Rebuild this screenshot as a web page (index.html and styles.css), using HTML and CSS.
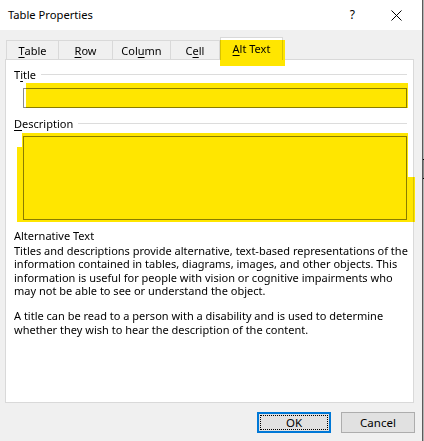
FILE: index.html
```html
<!DOCTYPE html>
<html>
<head>
<meta charset="utf-8">
<link rel="stylesheet" href="styles.css">
</head>
<body>
<div class="screen">
  <div class="dialog">
    <div class="titlebar">
      <span class="wtitle">Table Properties</span>
      <span class="help">?</span>
      <span class="close">
        <svg width="11" height="11" viewBox="0 0 11 11"><path d="M0.5 0.5 L10.5 10.5 M10.5 0.5 L0.5 10.5" stroke="#000" stroke-width="1" fill="none"/></svg>
      </span>
    </div>
    <div class="body">
      <div class="tabs">
        <div class="tab t1"><u>T</u>able</div>
        <div class="tab t2"><u>R</u>ow</div>
        <div class="tab t3">Col<u>u</u>mn</div>
        <div class="tab t4">C<u>e</u>ll</div>
        <div class="tab sel"><u>A</u>lt Text<span class="hl hl-tab"></span></div>
      </div>
      <div class="panel">
        <div class="group"><span>T<u>i</u>tle</span><span class="rule"></span></div>
        <div class="field-wrap">
          <div class="field"></div>
          <span class="hl hl-title"></span>
        </div>
        <div class="group g2"><span><u>D</u>escription</span><span class="rule"></span></div>
        <div class="area-wrap">
          <div class="area"></div>
          <span class="hl hl-desc"></span>
        </div>
        <div class="alt-head">Alternative Text</div>
        <p class="para">Titles and descriptions provide alternative, text-based representations of the<br>information contained in tables, diagrams, images, and other objects. This<br>information is useful for people with vision or cognitive impairments who<br>may not be able to see or understand the object.</p>
        <p class="para p2">A title can be read to a person with a disability and is used to determine<br>whether they wish to hear the description of the content.</p>
      </div>
      <div class="footer">
        <button class="btn ok"><span class="focus">OK</span></button>
        <button class="btn cancel">Cancel</button>
      </div>
    </div>
  </div>
  <div class="edge"><span class="edge-mark"></span></div>
</div>
</body>
</html>
```
FILE: styles.css
```css
html, body {
  margin: 0;
  padding: 0;
}
body {
  width: 424px;
  height: 441px;
  overflow: hidden;
  font-family: "Noto Sans", "Segoe UI", sans-serif;
  font-size: 11px;
  color: #000;
  background: #f0f0f0;
}
.screen {
  display: flex;
  height: 441px;
}
.dialog {
  width: 422px;
  height: 441px;
  background: #f0f0f0;
  display: flex;
  flex-direction: column;
}
.edge {
  width: 1px;
  flex: none;
  border-left: 1px solid #5a5a5a;
  background: #b4b4b4;
  position: relative;
}
.edge-mark {
  position: absolute;
  left: 0;
  top: 159px;
  width: 1px;
  height: 18px;
  border-top: 1px solid #000;
  border-bottom: 1px solid #000;
  background: #8c8c8c;
}
.titlebar {
  height: 30px;
  background: #fff;
  display: flex;
  align-items: center;
  flex: none;
}
.wtitle {
  margin-left: 8px;
  font-size: 11.2px;
  flex: 1;
  padding-bottom: 1px;
}
.help {
  font-size: 12px;
  margin-right: 36px;
  padding-bottom: 1px;
}
.close {
  display: flex;
  margin-right: 20px;
}
.body {
  flex: 1;
  display: flex;
  flex-direction: column;
  padding: 7px 0 0 0;
}
.tabs {
  display: flex;
  align-items: flex-end;
  height: 22px;
  margin-left: 6px;
  position: relative;
  z-index: 2;
}
.tab {
  height: 19px;
  box-sizing: border-box;
  border: 1px solid #d9d9d9;
  border-bottom: none;
  border-right: none;
  background: #f0f0f0;
  display: flex;
  justify-content: center;
  align-items: center;
  padding-top: 1px;
}
.t1 { width: 52px; }
.t2 { width: 54px; }
.t3 { width: 58px; }
.t4 { width: 50px; border-right: 1px solid #d9d9d9; }
.tab.sel {
  width: 63px;
  height: 23px;
  background: #fff;
  border: 1px solid #d9d9d9;
  border-bottom: none;
  margin-bottom: -1px;
  position: relative;
  padding-top: 0;
  padding-bottom: 2px;
}
.hl {
  position: absolute;
  background: #ffe600;
  mix-blend-mode: multiply;
}
.hl-tab {
  left: -1px;
  top: 2px;
  width: 65px;
  height: 26px;
}
.panel {
  margin-left: 5px;
  width: 409px;
  height: 344px;
  box-sizing: border-box;
  border: 1px solid #d9d9d9;
  background: #fff;
  padding: 6px 6px 0 8px;
  position: relative;
  z-index: 1;
}
.group {
  display: flex;
  align-items: center;
  height: 16px;
}
u { text-decoration-thickness: 1px; text-underline-offset: 2px; }
.rule {
  flex: 1;
  height: 0;
  border-top: 1px solid #dcdcdc;
  margin-left: 5px;
  margin-top: 1px;
}
.field-wrap {
  position: relative;
  margin: 6px 0 0 9px;
  height: 20px;
}
.field {
  height: 20px;
  box-sizing: border-box;
  border: 1px solid #8a8a8a;
  background: #fff;
}
.hl-title {
  left: 3px;
  top: -5px;
  right: -1px;
  height: 25px;
}
.g2 {
  margin-top: 7px;
}
.area-wrap {
  position: relative;
  margin: 5px 0 0 9px;
  height: 84px;
}
.area {
  height: 84px;
  box-sizing: border-box;
  border: 1px solid #8a8a8a;
  background: #fff;
}
.hl-desc {
  left: -6px;
  top: -3px;
  width: 398px;
  height: 89px;
  clip-path: polygon(5px 0, 391px 0, 391px 44px, 398px 44px, 398px 89px, 0 89px, 0 14px, 5px 14px);
}
.alt-head {
  margin-top: 8px;
  height: 16px;
  line-height: 16px;
}
.para {
  margin: 0;
  line-height: 13.33px;
  white-space: nowrap;
}
.p2 {
  margin-top: 12px;
}
.footer {
  display: flex;
  justify-content: flex-end;
  gap: 10px;
  padding: 9px 7px 0 0;
}
.btn {
  font-family: inherit;
  font-size: 11.5px;
  color: #000;
  height: 21px;
  box-sizing: border-box;
  background: #e1e1e1;
  border: 1px solid #adadad;
  margin: 0;
  padding: 0;
  display: flex;
  align-items: center;
  justify-content: center;
}
.ok {
  width: 74px;
  border: 2px solid #0078d7;
  padding: 1px;
}
.focus {
  flex: 1;
  align-self: stretch;
  display: flex;
  align-items: center;
  justify-content: center;
  border: 1px dotted #000;
}
.cancel {
  width: 74px;
}
```
